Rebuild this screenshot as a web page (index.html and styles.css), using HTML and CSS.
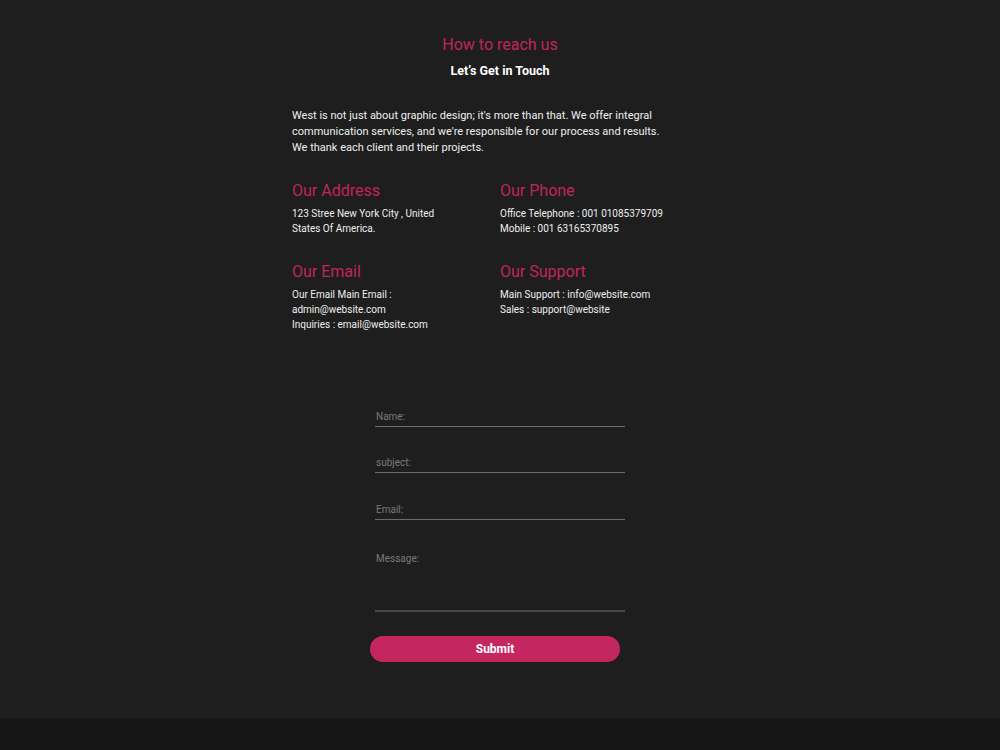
FILE: index.html
```html
<!DOCTYPE html>
<html>
<head>
<meta charset="utf-8">
<link rel="stylesheet" href="styles.css">
</head>
<body>
<main class="contact">
  <h2 class="title">How to reach us</h2>
  <h3 class="subtitle">Let’s Get in Touch</h3>
  <p class="intro">West is not just about graphic design; it's more than that. We offer integral communication services, and we're responsible for our process and results. We thank each client and their projects.</p>
  <div class="info-grid">
    <div class="info">
      <h4>Our Address</h4>
      <p>123 Stree New York City , United States Of America.</p>
    </div>
    <div class="info">
      <h4>Our Phone</h4>
      <p>Office Telephone : 001 01085379709<br>Mobile : 001 63165370895</p>
    </div>
    <div class="info">
      <h4>Our Email</h4>
      <p>Our Email Main Email :<br>admin@website.com<br>Inquiries : email@website.com</p>
    </div>
    <div class="info">
      <h4>Our Support</h4>
      <p>Main Support : info@website.com<br>Sales : support@website</p>
    </div>
  </div>
  <form class="form">
    <input class="field" type="text" placeholder="Name:">
    <input class="field" type="text" placeholder="subject:">
    <input class="field email" type="text" placeholder="Email:">
    <textarea class="field message" placeholder="Message:"></textarea>
    <button class="submit" type="button">Submit</button>
  </form>
</main>
<footer class="footer"></footer>
</body>
</html>
```
FILE: styles.css
```css
html, body {
  margin: 0;
  padding: 0;
  background: #1e1e1e;
  font-family: Roboto, "Liberation Sans", sans-serif;
  color: #ffffff;
}
.contact {
  height: 718px;
  box-sizing: border-box;
  padding-top: 35px;
  display: flex;
  flex-direction: column;
  align-items: center;
}
.title {
  margin: 0;
  font-size: 16px;
  line-height: 20px;
  font-weight: 400;
  color: #c2255c;
}
.subtitle {
  margin: 8px 0 0;
  font-size: 12.5px;
  line-height: 16px;
  font-weight: 700;
  color: #ffffff;
}
.intro {
  width: 416px;
  box-sizing: border-box;
  padding-right: 40px;
  margin: 29px 0 0;
  font-size: 11px;
  line-height: 16px;
  color: #eeeeee;
}
.info-grid {
  width: 416px;
  margin-top: 25px;
  display: grid;
  grid-template-columns: 208px 208px;
  row-gap: 26px;
}
.info h4 {
  margin: 0;
  font-size: 16px;
  line-height: 20px;
  font-weight: 400;
  color: #c2255c;
}
.info p {
  margin: 5px 0 0;
  font-size: 10px;
  line-height: 15px;
  color: #eeeeee;
  max-width: 160px;
}
.info:nth-child(2) p, .info:nth-child(4) p {
  max-width: 208px;
}
.form {
  width: 260px;
  margin-top: 75px;
  display: flex;
  flex-direction: column;
  align-items: flex-start;
}
.field {
  margin: 0 0 0 5px;
  width: 250px;
  height: 20px;
  box-sizing: border-box;
  padding: 0 1px;
  background: transparent;
  border: none;
  border-bottom: 1px solid #6a6a6a;
  font-family: Roboto, "Liberation Sans", sans-serif;
  font-size: 10px;
  color: #dddddd;
  outline: none;
}
.field + .field {
  margin-top: 26px;
}
.field.email {
  margin-top: 27px;
}
.field::placeholder {
  color: #7a7a7a;
}
.field.message {
  margin-top: 30px;
  height: 62px;
  padding-top: 2px;
  resize: none;
  border-bottom: 2px solid #474747;
  line-height: 13px;
}
.submit {
  margin-top: 24px;
  width: 250px;
  height: 26px;
  border: none;
  border-radius: 13px;
  background: #c4265f;
  color: #ffffff;
  font-family: Roboto, "Liberation Sans", sans-serif;
  font-size: 12px;
  font-weight: 700;
  cursor: pointer;
}
.footer {
  height: 32px;
  background: #171717;
}
```
